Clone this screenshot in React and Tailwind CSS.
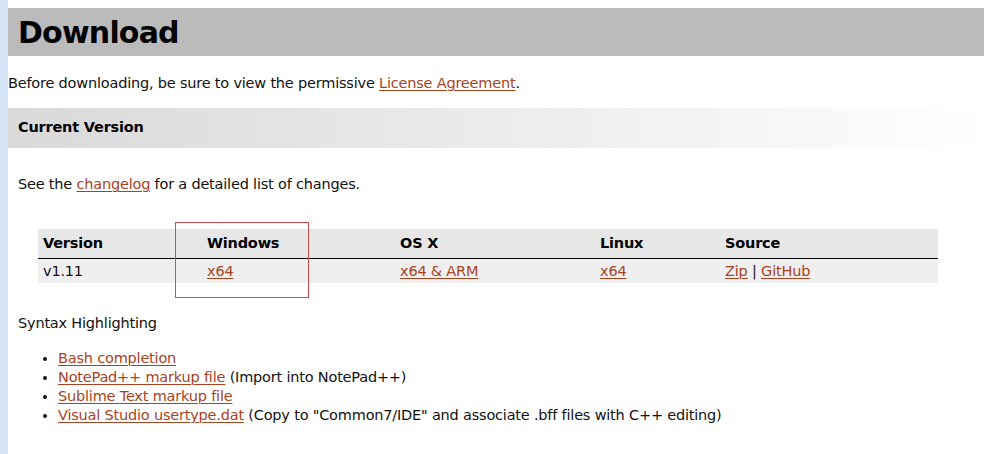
import React from "react";

const font = { fontFamily: '"DejaVu Sans", Verdana, sans-serif' };

const Link = ({ children }) => (
  <a href="#" className="text-[#a8431e] underline underline-offset-2 decoration-1">
    {children}
  </a>
);

const columns = ["Version", "Windows", "OS X", "Linux", "Source"];

export default function App() {
  return (
    <div className="flex min-h-[454px] bg-white text-[#111] text-[14.5px] tracking-[-0.2px]" style={font}>
      <div className="w-2 shrink-0 bg-[#d5e4f6]" />

      <div className="flex-1 pt-2">
        <h1 className="h-12 bg-[#bbbbbb] pl-[10px] flex items-center text-[30px] font-bold text-black tracking-[-0.8px]">
          Download
        </h1>

        <p className="mt-[17px] leading-[20px]">
          Before downloading, be sure to view the permissive <Link>License Agreement</Link>.
        </p>

        <h2 className="mt-[15px] h-10 pl-[10px] flex items-center font-bold text-black bg-gradient-to-r from-[#d9d9d9] to-white">
          Current Version
        </h2>

        <div className="pl-[10px]">
          <p className="mt-[26px] leading-[20px]">
            See the <Link>changelog</Link> for a detailed list of changes.
          </p>

          <div className="relative mt-[35px] ml-[20px] w-[900px]">
            <div className="grid grid-cols-[164px_193px_200px_125px_218px] bg-[#e7e7e7] border-b border-black h-[30px] items-center font-bold text-black pt-[1px]">
              {columns.map((c) => (
                <div key={c} className="pl-[5px]">
                  {c}
                </div>
              ))}
            </div>
            <div className="grid grid-cols-[164px_193px_200px_125px_218px] bg-[#efefef] h-[24px] items-center pt-[1px]">
              <div className="pl-[5px]">v1.11</div>
              <div className="pl-[5px]">
                <Link>x64</Link>
              </div>
              <div className="pl-[5px]">
                <Link>x64 &amp; ARM</Link>
              </div>
              <div className="pl-[5px]">
                <Link>x64</Link>
              </div>
              <div className="pl-[5px]">
                <Link>Zip</Link> | <Link>GitHub</Link>
              </div>
            </div>
            <div className="absolute left-[137px] top-[-7px] w-[134px] h-[76px] border border-[#d24a4a]" />
          </div>

          <p className="mt-[30px] leading-[20px]">Syntax Highlighting</p>

          <ul className="mt-[16px] pl-[40px] list-disc leading-[19px]">
            <li>
              <Link>Bash completion</Link>
            </li>
            <li>
              <Link>NotePad++ markup file</Link> (Import into NotePad++)
            </li>
            <li>
              <Link>Sublime Text markup file</Link>
            </li>
            <li>
              <Link>Visual Studio usertype.dat</Link> (Copy to "Common7/IDE" and associate .bff files with C++ editing)
            </li>
          </ul>
        </div>
      </div>
    </div>
  );
}
